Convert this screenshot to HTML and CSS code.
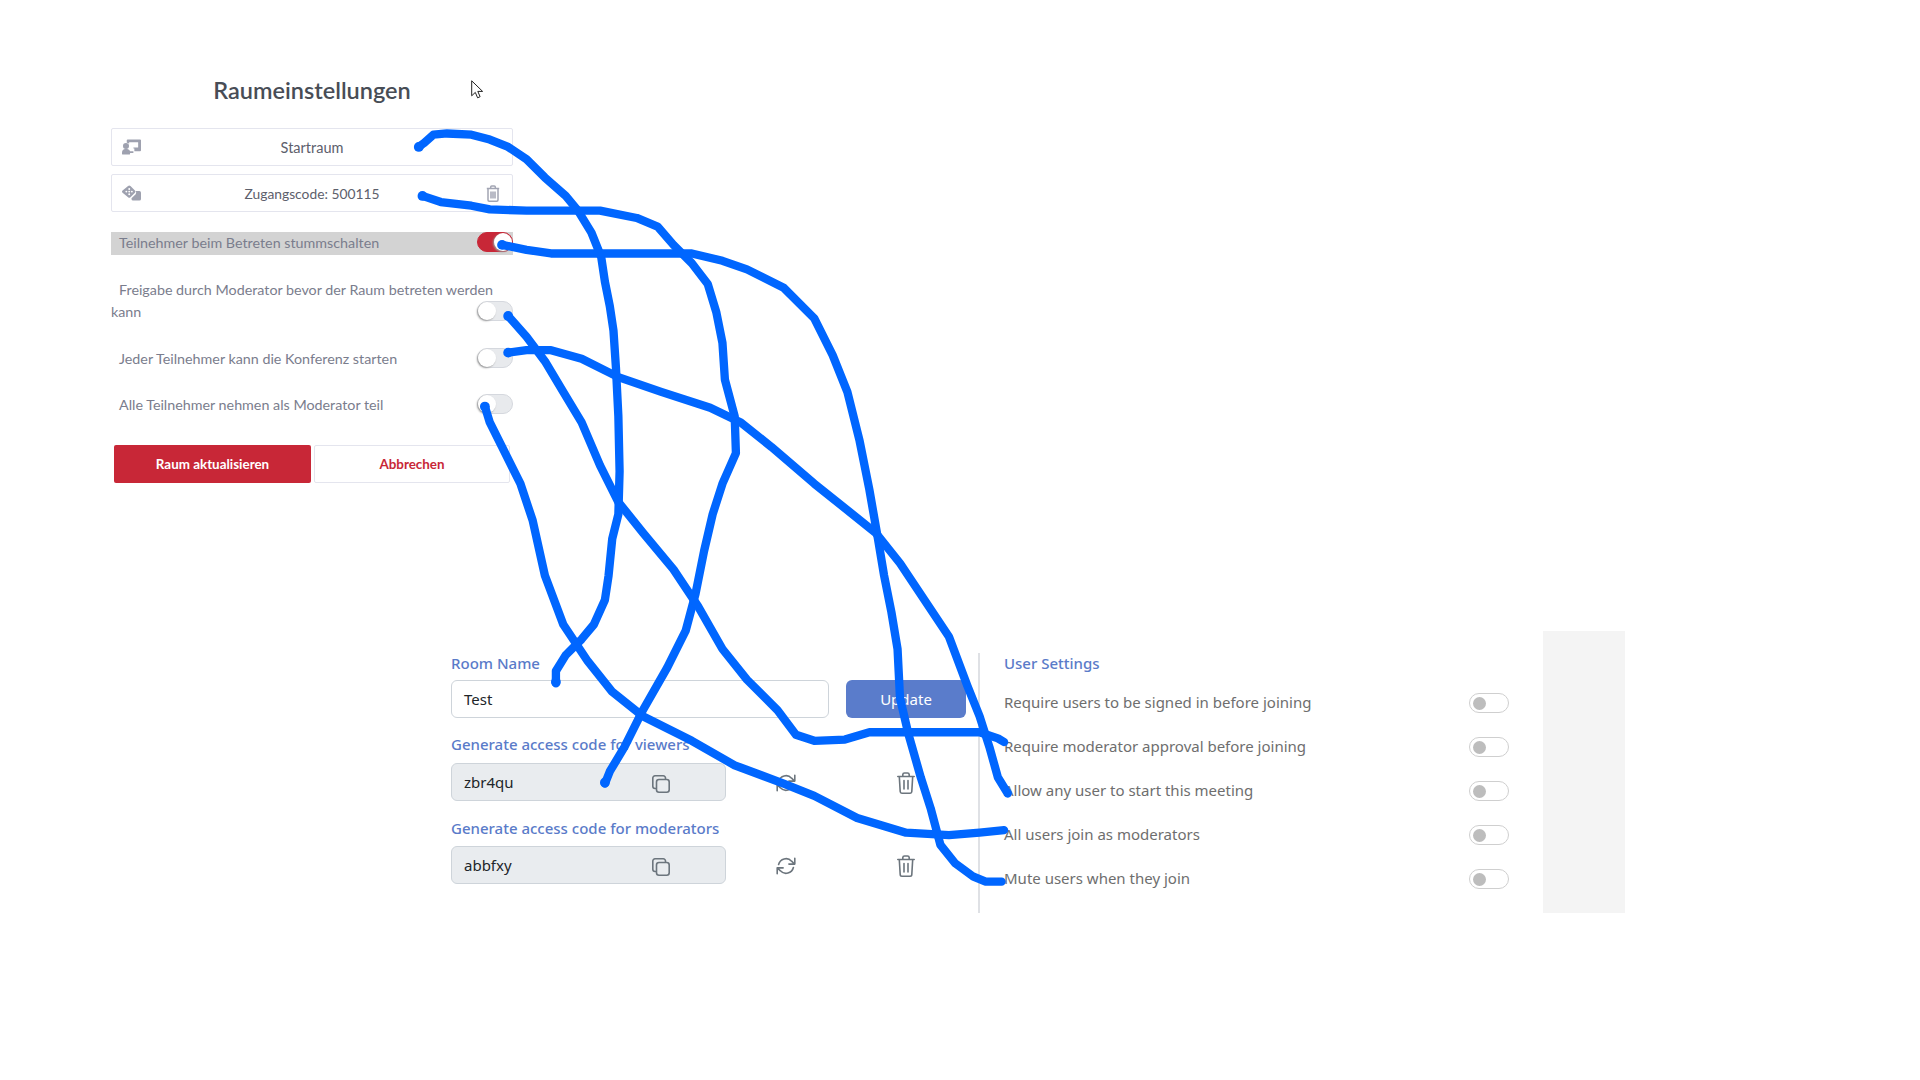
FILE: index.html
```html
<!DOCTYPE html>
<html lang="de">
<head>
<meta charset="utf-8">
<title>Raumeinstellungen</title>
<link rel="stylesheet" href="styles.css">
</head>
<body>
<section class="panel">
  <h1 class="panel-title">Raumeinstellungen</h1>
  <div class="info-box">
    <svg class="box-icon" viewBox="0 0 20 16"><path d="M6 0h13a1 1 0 0 1 1 1v10.500a1 1 0 0 1-1 1h-6v-3h-1V8.500h5V3H7.500v1.500A5 5 0 0 0 5 3.400V1a1 1 0 0 1 1-1z"/><circle cx="4.200" cy="7" r="3.200"/><path d="M0 14c0-2.400 1.600-3.800 3.300-3.800h1.900c1.700 0 2.800 1 3.200 2.300H12v1.800H8.500v.7a1 1 0 0 1-1 1H1a1 1 0 0 1-1-1z"/></svg>
    <span class="box-text">Startraum</span>
  </div>
  <div class="info-box">
    <svg class="box-icon" viewBox="0 0 20 16"><path d="M6.400.6a1.800 1.800 0 0 1 2.500 0l4.700 4.700a1.800 1.800 0 0 1 0 2.500l-4.700 4.700a1.800 1.800 0 0 1-2.500 0L.6 7.800a1.800 1.800 0 0 1 0-2.500z"/><path d="M14.500 6h3.800A1.700 1.700 0 0 1 20 7.700v6.600a1.700 1.700 0 0 1-1.700 1.700h-6.600a1.700 1.700 0 0 1-1.700-1.700v-.7l4.400-4.400a3 3 0 0 0 .1-3.200z"/><circle cx="7.600" cy="6.500" r="1" fill="#fff"/><circle cx="4.600" cy="6.500" r="1" fill="#fff"/><circle cx="10.400" cy="6.500" r="1" fill="#fff"/><circle cx="7.600" cy="3.800" r="1" fill="#fff"/><circle cx="7.600" cy="9.300" r="1" fill="#fff"/></svg>
    <span class="box-text box-code">Zugangscode: 500115</span>
    <svg class="box-trash" viewBox="0 0 14 17"><path d="M.8 3.500h12.400M4.700 3.500V2a1 1 0 0 1 1-1h2.600a1 1 0 0 1 1 1v1.500M2 3.500V15a1.200 1.200 0 0 0 1.200 1.200h7.600A1.200 1.200 0 0 0 12 15V3.500M5 6.500v7M7 6.500v7M9 6.500v7"/></svg>
  </div>
  <div class="option option-active">
    <span class="option-text">Teilnehmer beim Betreten stummschalten</span>
    <span class="switch switch-on"></span>
  </div>
  <div class="option option-wrap">
    <span class="option-text">Freigabe durch Moderator bevor der Raum betreten werden kann</span>
    <span class="switch switch-low"></span>
  </div>
  <div class="option option-third">
    <span class="option-text">Jeder Teilnehmer kann die Konferenz starten</span>
    <span class="switch"></span>
  </div>
  <div class="option option-fourth">
    <span class="option-text">Alle Teilnehmer nehmen als Moderator teil</span>
    <span class="switch"></span>
  </div>
  <div class="panel-actions">
    <button class="btn-primary">Raum aktualisieren</button>
    <button class="btn-secondary">Abbrechen</button>
  </div>
</section>

<section class="meeting">
  <div class="meeting-main">
    <label class="field-label label-room">Room Name</label>
    <div class="name-row">
      <div class="name-input">Test</div>
      <button class="btn-update">Update</button>
    </div>
    <label class="field-label label-viewers">Generate access code for viewers</label>
    <div class="code-row code-row-first">
      <div class="code-field"><span class="code-value">zbr4qu</span>
        <svg class="icon icon-copy" viewBox="0 0 18 18"><path d="M13.500 3.800V3a2.200 2.200 0 0 0-2.200-2.200H3A2.200 2.200 0 0 0 .8 3v8.300A2.200 2.200 0 0 0 3 13.500h.8"/><rect x="4.500" y="4.500" width="12.700" height="12.700" rx="2.500"/></svg>
      </div>
      <svg class="icon icon-sync" viewBox="0 0 20 18"><path d="M2.600 7.500a7.600 7.600 0 0 1 13-3.300L18.500 7M18.800 1.200v5.900h-5.900M17.400 10.500a7.600 7.600 0 0 1-13 3.300L1.500 11M1.200 16.800v-5.900h5.900"/></svg>
      <svg class="icon icon-trash" viewBox="0 0 18 22"><path d="M.8 4.500h16.400M5.800 4.500V2.600A1.700 1.700 0 0 1 7.500 1h3a1.700 1.700 0 0 1 1.700 1.600v1.900M2.300 4.500l.9 15a1.700 1.700 0 0 0 1.700 1.700h8.200a1.700 1.700 0 0 0 1.700-1.700l.9-15M7 8.500v8.500M11 8.500v8.500"/></svg>
    </div>
    <label class="field-label label-mods">Generate access code for moderators</label>
    <div class="code-row">
      <div class="code-field"><span class="code-value">abbfxy</span>
        <svg class="icon icon-copy" viewBox="0 0 18 18"><path d="M13.500 3.800V3a2.200 2.200 0 0 0-2.200-2.200H3A2.200 2.200 0 0 0 .8 3v8.300A2.200 2.200 0 0 0 3 13.500h.8"/><rect x="4.500" y="4.500" width="12.700" height="12.700" rx="2.500"/></svg>
      </div>
      <svg class="icon icon-sync" viewBox="0 0 20 18"><path d="M2.600 7.500a7.600 7.600 0 0 1 13-3.300L18.500 7M18.800 1.200v5.900h-5.900M17.400 10.500a7.600 7.600 0 0 1-13 3.300L1.500 11M1.200 16.800v-5.900h5.900"/></svg>
      <svg class="icon icon-trash" viewBox="0 0 18 22"><path d="M.8 4.500h16.400M5.800 4.500V2.600A1.700 1.700 0 0 1 7.500 1h3a1.700 1.700 0 0 1 1.700 1.600v1.900M2.300 4.500l.9 15a1.700 1.700 0 0 0 1.700 1.700h8.200a1.700 1.700 0 0 0 1.700-1.700l.9-15M7 8.500v8.500M11 8.500v8.500"/></svg>
    </div>
  </div>
  <div class="meeting-settings">
    <h2 class="settings-title">User Settings</h2>
    <div class="setting"><span>Require users to be signed in before joining</span><span class="pill"></span></div>
    <div class="setting"><span>Require moderator approval before joining</span><span class="pill"></span></div>
    <div class="setting"><span>Allow any user to start this meeting</span><span class="pill"></span></div>
    <div class="setting"><span>All users join as moderators</span><span class="pill"></span></div>
    <div class="setting"><span>Mute users when they join</span><span class="pill"></span></div>
  </div>
  <div class="side-block"></div>
</section>

<svg class="cursor" viewBox="0 0 12 19"><path d="M.7.800v15l3.600-3.400 2.300 5.400 2.500-1.100-2.300-5.300h4.800z"/></svg>

<svg class="scribble" viewBox="0 0 1568 882">
  <polyline points="342,120 346,117 354,110 365,109 385,110 400,114 415,120 430,130 445,145 462,160 472,172 483,190 491,210 494,230 498,250 501,270 503,300 505,340 506,385 505,420 500,440 497,470 494,490 485,510 475,522 462,535 454,548 454,558"/>
  <polyline points="345,160 360,165 385,168 400,171 430,172 490,172 520,178 537,185 550,200 565,215 578,232 585,255 590,280 592,310 600,340 601,370 590,395 582,420 575,450 568,485 560,515 545,545 525,580 510,610 498,630 494,640"/>
  <polyline points="410,200 430,204 450,207 480,207 565,207 590,213 610,220 640,235 665,260 680,290 692,320 702,360 710,400 717,440 722,470 728,500 733,530 735,570 742,600 752,635 760,660 768,690 780,705 795,716 805,720 818,720"/>
  <polyline points="415,258 430,275 445,295 460,320 475,345 490,380 505,410 525,435 550,465 570,495 590,530 610,555 635,580 650,600 665,605 690,604 710,598 740,598 800,598 815,603 820,606"/>
  <polyline points="415,288 430,286 450,286 475,293 505,308 540,320 580,333 605,345 630,365 665,395 715,435 735,460 755,490 775,520 790,560 800,585 808,610 815,635 823,648"/>
  <polyline points="396,332 400,345 410,365 425,395 435,425 445,470 460,510 480,540 500,565 525,585 565,605 600,625 640,640 665,650 700,668 740,680 775,682 800,680 820,678"/>
  <circle cx="342" cy="120" r="4"/><circle cx="345" cy="160" r="4"/><circle cx="410" cy="200" r="4"/><circle cx="415" cy="258" r="4"/><circle cx="415" cy="288" r="4"/><circle cx="396" cy="332" r="4"/><circle cx="454" cy="557" r="4"/><circle cx="494" cy="639" r="4"/>
</svg>
</body>
</html>
```

FILE: styles.css
```css
* { box-sizing: border-box; }
html, body { margin: 0; padding: 0; }
body {
  width: 1920px;
  height: 1080px;
  overflow: hidden;
  background: #fff;
  position: relative;
  font-family: "Lato", "Liberation Sans", sans-serif;
}

/* Left panel */
.panel { width: 402px; margin-left: 111px; padding-top: 74px; }
.panel-title {
  margin: 0 0 22px;
  height: 32px;
  line-height: 32px;
  font-size: 23.500px;
  font-weight: 600;
  text-align: center;
  color: #484d56;
}
.info-box {
  height: 38px;
  margin-bottom: 8px;
  display: grid;
  grid-template-columns: 44px 1fr 44px;
  align-items: center;
  border: 1px solid #e4e5ee;
  border-radius: 2px;
}
.box-icon { width: 19px; height: 16px; margin-left: 10px; fill: #9ea1af; }
.box-trash { width: 14px; height: 17px; margin-left: 18px; fill: none; stroke: #a2a5b3; stroke-width: 1.500; }
.box-text { text-align: center; font-size: 14.500px; color: #5d606c; }
.box-code { font-size: 13.800px; }
.option {
  display: grid;
  grid-template-columns: 1fr 36px;
  font-size: 14.300px;
  line-height: 22px;
  color: #7a7d8d;
}
.option-text { grid-column: 1 / -1; grid-row: 1; text-indent: 8px; }
.option-active { margin-top: 20px; background: #d3d3d3; height: 23px; line-height: 21px; }
.option-wrap { margin-top: 24px; }
.option-third { margin-top: 25px; }
.option-fourth { margin-top: 24px; }
.switch {
  grid-column: 2;
  grid-row: 1;
  align-self: start;
  width: 36px;
  height: 20px;
  border-radius: 10px;
  background: #e8eaed;
  border: 1px solid #d5d8de;
  display: flex;
  align-items: center;
}
.switch::before {
  content: "";
  width: 18px;
  height: 18px;
  border-radius: 50%;
  background: #fff;
  box-shadow: -1px 1px 2px #9a9a9a;
}
.switch-on { background: #c82737; border-color: #c82737; justify-content: flex-end; }
.switch-low { align-self: end; margin-bottom: 2px; }
.panel-actions { margin-top: 29px; padding-left: 3px; display: flex; gap: 3px; }
.btn-primary, .btn-secondary {
  width: 197px;
  height: 38px;
  border-radius: 2px;
  font-family: inherit;
  font-size: 13.400px;
  font-weight: 700;
  padding: 0;
}
.btn-primary { background: #c82737; border: 0; color: #fff; }
.btn-secondary { width: 196px; background: #fff; border: 1px solid #e4e5ee; color: #c82737; }

/* Lower meeting area */
.meeting {
  position: absolute;
  left: 451px;
  top: 631px;
  display: flex;
  height: 282px;
}
.meeting-main { width: 515px; padding-top: 22px; font-family: "Noto Sans", sans-serif; }
.field-label {
  display: block;
  height: 22px;
  line-height: 20px;
  font-size: 15px;
  font-weight: 500;
  color: #5a7bc9;
}
.name-row { margin-top: 5px; display: flex; gap: 17px; }
.name-input {
  width: 378px;
  height: 38px;
  line-height: 36px;
  padding-left: 12px;
  border: 1px solid #ced4da;
  border-radius: 6px;
  font-size: 15px;
  color: #212529;
}
.btn-update {
  width: 120px;
  height: 38px;
  border: 0;
  border-radius: 6px;
  background: #5a7ccb;
  color: #fff;
  font-family: inherit;
  font-size: 15px;
  padding: 0;
}
.label-viewers { margin-top: 16px; }
.label-mods { margin-top: 17px; }
.code-row {
  margin-top: 6px;
  display: grid;
  grid-template-columns: 275px 120px 120px;
  align-items: center;
  justify-items: center;
}
.code-row-first { margin-top: 7px; }
.code-field {
  width: 275px;
  height: 38px;
  display: grid;
  grid-template-columns: 185px 24px;
  align-items: center;
  justify-items: center;
  padding-left: 12px;
  background: #e9ecef;
  border: 1px solid #ced4da;
  border-radius: 6px;
  font-size: 15px;
  color: #212529;
}
.code-value { justify-self: start; }
.icon { fill: none; stroke: #6c757d; stroke-width: 1.600; stroke-linecap: round; stroke-linejoin: round; }
.icon-copy { width: 18px; height: 18px; margin-top: 3px; }
.icon-sync { width: 20px; height: 18px; margin-top: 1px; }
.icon-trash { width: 18px; height: 22px; margin-top: 1px; }
.meeting-settings {
  width: 531px;
  margin-left: 12px;
  margin-top: 22px;
  border-left: 2px solid #dfe1e5;
  padding-left: 24px;
  font-family: "Noto Sans", sans-serif;
  font-size: 15px;
  color: #6e6e6e;
}
.settings-title {
  margin: 0;
  height: 22px;
  line-height: 20px;
  font-size: 15px;
  font-weight: 500;
  color: #5a7bc9;
}
.setting { height: 44px; display: flex; align-items: center; justify-content: space-between; line-height: 20px; }
.setting span:first-child { padding-bottom: 2px; }
.setting:first-of-type { margin-top: 6px; }
.pill {
  width: 40px;
  height: 20px;
  border: 1px solid #cfcfcf;
  border-radius: 10px;
  display: flex;
  align-items: center;
  padding-left: 3px;
}
.pill::before { content: ""; width: 13px; height: 13px; border-radius: 50%; background: #bdbdbd; }
.side-block { width: 82px; margin-left: 34px; background: #f4f4f4; }

/* Overlays: pointer and pen annotations */
.cursor {
  position: absolute;
  left: 471px;
  top: 80px;
  width: 12px;
  height: 19px;
  fill: #fff;
  stroke: #222;
  stroke-width: 1;
}
.scribble {
  position: absolute;
  left: 0;
  top: 0;
  width: 1920px;
  height: 1080px;
  fill: none;
  stroke: #0066ff;
  stroke-width: 6.800;
  stroke-linecap: round;
  stroke-linejoin: round;
}
.scribble circle { fill: #0066ff; stroke: none; }
```
